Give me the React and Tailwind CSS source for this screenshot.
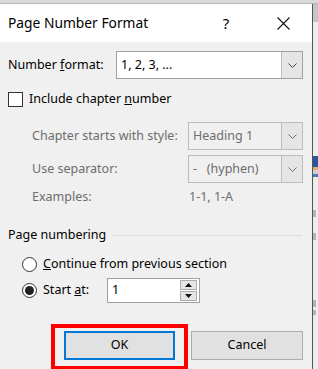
import React from "react"

const font = { fontFamily: '"Noto Sans", "Open Sans", sans-serif' }

const Chevron = ({ gray }) => (
  <svg width="9" height="5" viewBox="0 0 9 5" fill="none">
    <path d="M0.5 0.5 L4.5 4.5 L8.5 0.5" stroke={gray ? "#6d6d6d" : "#444"} strokeWidth="1" />
  </svg>
)

const Combo = ({ value, disabled, className }) => (
  <div
    className={`flex h-[28px] border ${
      disabled ? "border-[#bcbcbc] bg-[#f0f0f0] text-[#6d6d6d]" : "border-[#a0a0a0] bg-white text-black"
    } ${className}`}
  >
    <div className="flex-1 flex items-center pl-[4px] whitespace-pre">{value}</div>
    <div className="w-[21px] flex items-center justify-center bg-[#e5e5e5] border-l border-[#bcbcbc]">
      <Chevron gray={disabled} />
    </div>
  </div>
)

const Radio = ({ checked }) => (
  <div className="w-[15px] h-[15px] rounded-full border border-[#333] bg-white flex items-center justify-center">
    {checked && <div className="w-[9px] h-[9px] rounded-full bg-[#222]" />}
  </div>
)

export default function App() {
  return (
    <div className="w-[318px] h-[369px] overflow-hidden flex flex-col bg-[#e6e6e6] text-[12.5px] leading-none" style={font}>
      <div className="h-[4px] shrink-0 bg-[#d9d9d9] border-b border-[#b8b8b8]" />
      <div className="flex flex-1 min-h-0">
        <div className="w-[313px] shrink-0 flex flex-col overflow-hidden bg-[#f0f0f0] border-r border-[#555]">
          {/* title bar */}
          <div className="h-[38px] shrink-0 bg-white flex items-center pl-[8px] text-[13.8px] text-black">
            <span className="flex-1">Page Number Format</span>
            <span className="w-[20px] text-center mr-[41px] text-[15px]">?</span>
            <svg width="13" height="13" viewBox="0 0 13 13" className="mr-[22px]">
              <path d="M0.5 0.5 L12.5 12.5 M12.5 0.5 L0.5 12.5" stroke="#111" strokeWidth="1.1" />
            </svg>
          </div>

          <div className="shrink-0 flex flex-col pl-[8px] pr-[9px] text-black">
            <div className="flex items-center mt-[9px]">
              <span className="w-[108px]">
                Number <span className="underline">f</span>ormat:
              </span>
              <Combo value="1, 2, 3, ..." className="flex-1" />
            </div>

            <div className="flex items-center mt-[13px] h-[15px]">
              <div className="w-[15px] h-[15px] border border-[#333] bg-white" />
              <span className="ml-[6px]">
                Include chapter <span className="underline">n</span>umber
              </span>
            </div>

            <div className="flex flex-col pl-[24px] text-[#6d6d6d]">
              <div className="flex items-center mt-[15px]">
                <span className="w-[156px]">Chapter starts with style:</span>
                <Combo value="Heading 1" disabled className="flex-1 h-[27px]" />
              </div>
              <div className="flex items-center mt-[5px]">
                <span className="w-[156px]">Use separator:</span>
                <Combo value={"-   (hyphen)"} disabled className="flex-1" />
              </div>
              <div className="flex items-center mt-[6px] h-[16px]">
                <span className="w-[157px]">Examples:</span>
                <span>1-1, 1-A</span>
              </div>
            </div>

            <div className="flex items-center mt-[22px] h-[16px]">
              <span>Page numbering</span>
              <div className="flex-1 h-px bg-[#dcdcdc] ml-[6px] mr-[1px]" />
            </div>

            <div className="flex flex-col pl-[14px]">
              <div className="flex items-center mt-[14px] h-[15px]">
                <Radio />
                <span className="ml-[6px]">
                  <span className="underline">C</span>ontinue from previous section
                </span>
              </div>
              <div className="flex items-center mt-[6px]">
                <Radio checked />
                <span className="ml-[6px] w-[64px]">
                  Start <span className="underline">a</span>t:
                </span>
                <div className="flex w-[93px] h-[25px] border border-[#a0a0a0] bg-white">
                  <div className="flex-1 flex items-center pl-[4px]">1</div>
                  <div className="w-[20px] flex flex-col gap-px p-px pr-[2px]">
                    <div className="flex-1 bg-[#e5e5e5] border border-[#adadad] flex items-center justify-center">
                      <svg width="7" height="4" viewBox="0 0 7 4"><path d="M0 4 L3.5 0 L7 4 Z" fill="#111" /></svg>
                    </div>
                    <div className="flex-1 bg-[#e5e5e5] border border-[#adadad] flex items-center justify-center">
                      <svg width="7" height="4" viewBox="0 0 7 4"><path d="M0 0 L3.5 4 L7 0 Z" fill="#111" /></svg>
                    </div>
                  </div>
                </div>
              </div>
            </div>

            <div className="flex items-start mt-[21px] ml-[43px]">
              <div className="border-[4px] border-[#ff0000] px-[9px] pt-[3px] pb-[6px]">
                <div className="w-[111px] h-[29px] bg-[#e1e1e1] border-2 border-[#0078d7] flex items-center justify-center">
                  OK
                </div>
              </div>
              <div className="ml-[3px] mt-[7px] w-[112px] h-[29px] bg-[#e1e1e1] border border-[#adadad] flex items-center justify-center">
                Cancel
              </div>
            </div>
          </div>
        </div>

        {/* document peeking behind the dialog */}
        <div className="flex-1 flex flex-col bg-[#ececec]">
          <div className="h-[18px] shrink-0 bg-[#c6c6c6]" />
          <div className="h-[134px] shrink-0" />
          <div className="h-[11px] shrink-0 bg-[#2b579a]" />
          <div className="h-[3px] shrink-0 bg-[#e0b070]" />
          <div className="h-[4px] shrink-0 bg-[#d0d0d0]" />
          <div className="h-[3px] shrink-0 bg-[#4a7ab8]" />
          <div className="h-[33px] shrink-0" />
          <div className="h-[7px] shrink-0 bg-[#b4b4b4] w-[3px]" />
          <div className="h-[16px] shrink-0" />
          <div className="h-[7px] shrink-0 bg-[#b4b4b4] w-[3px]" />
          <div className="h-[60px] shrink-0" />
          <div className="h-[7px] shrink-0 bg-[#b4b4b4] w-[3px]" />
          <div className="h-[3px] shrink-0" />
          <div className="h-[5px] shrink-0 bg-[#b4b4b4] w-[3px]" />
        </div>
      </div>
    </div>
  )
}
